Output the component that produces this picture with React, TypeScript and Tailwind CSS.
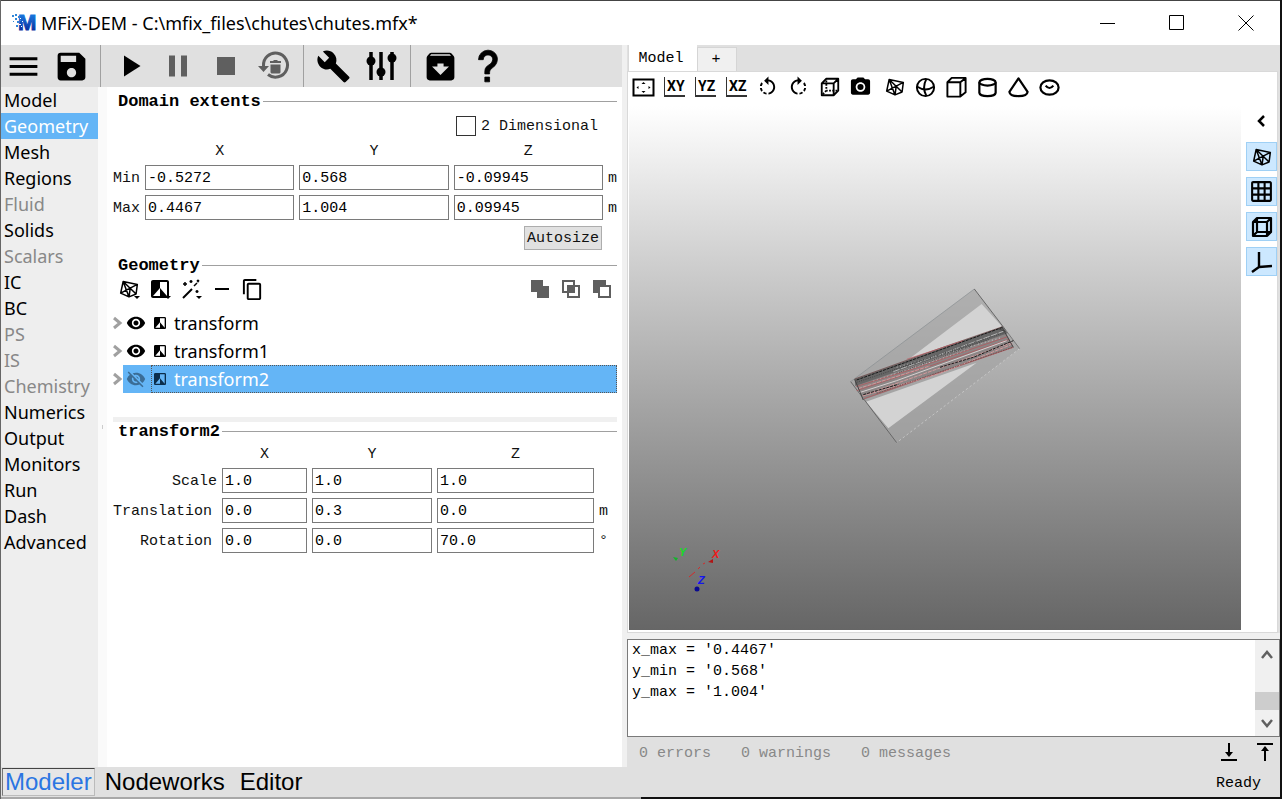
import React from 'react';
import {
  MdArchive, MdBuild, MdCameraAlt, MdContentCopy, MdFilterBAndW, MdGridOn, MdMenu, MdPause, MdPlayArrow,
  MdRemove, MdRotateLeft, MdRotateRight, MdSave, MdStop, MdVisibility, MdVisibilityOff,
} from 'react-icons/md';

const mono = "font-['Liberation_Mono',monospace] text-[15px] leading-5";
const sans = "font-['Noto_Sans',sans-serif] text-[18px]";

type BtnProps = { label: string; className: string; children: React.ReactNode; disabled?: boolean };

function IconButton({ label, className, children, disabled }: BtnProps) {
  return (
    <button type="button" aria-label={label} disabled={disabled} className={`relative flex shrink-0 items-center justify-center ${className}`}>
      {children}
    </button>
  );
}

function Stroke({ size, width = 2, children }: { size: number; width?: number; children: React.ReactNode }) {
  return (
    <svg width={size} height={size} viewBox="0 0 24 24" fill="none" stroke="currentColor" strokeWidth={width} strokeLinejoin="round">
      {children}
    </svg>
  );
}

const Poly = ({ size }: { size: number }) => (
  <Stroke size={size} width={1.8}>
    <path d="M5 3L22 6.500L20.500 18L12 21.500L2 17ZM5 3L20.500 18M5 3L12 21.500M2 17L22 6.500M12 21.500L13.500 11" />
  </Stroke>
);

function Logo() {
  return (
    <svg width="26" height="32" viewBox="0 -6 26 32" aria-hidden="true">
      <defs>
        <linearGradient id="logo" x1="0" y1="0" x2="0" y2="1">
          <stop offset="0" stopColor="#1d8cf0" />
          <stop offset="1" stopColor="#061a8c" />
        </linearGradient>
      </defs>
      <text x="6" y="17" fontSize="22" fontWeight="900" fontFamily="Liberation Sans" fill="url(#logo)" stroke="url(#logo)" strokeWidth="1">M</text>
      <g fill="#2f86d8">
        <path d="M0 2h2v2h-2zM3 1h2v2h-2zM3 5h2v2h-2zM6 3h2v2h-2zM1 8h1v1h-1zM5 8h2v2h-2zM4 12h2v2h-2zM8 7h1v1h-1z" />
      </g>
      <path d="M8 5h1v1h-1zM10 8h1v1h-1zM7 11h2v1h-2zM9 13h1v1h-1z" fill="#fff" />
    </svg>
  );
}

function TitleBar() {
  return (
    <header className="flex h-11 shrink-0 items-center bg-white pl-[11px]">
      <Logo />
      <h1 className="ml-[3px] flex-1 whitespace-nowrap font-['Noto_Sans',sans-serif] text-[18px] text-black">MFiX-DEM - C:\mfix_files\chutes\chutes.mfx*</h1>
      <IconButton label="Minimize" className="h-11 w-[69px]">
        <svg width="16" height="16" stroke="#000"><path d="M0 8.500H15" /></svg>
      </IconButton>
      <IconButton label="Maximize" className="h-11 w-[69px]">
        <svg width="16" height="16" stroke="#000" fill="none"><path d="M.5 .5H14.500V14.500H.5Z" /></svg>
      </IconButton>
      <IconButton label="Close" className="h-11 w-[69px]">
        <svg width="16" height="16" stroke="#000"><path d="M.5 .5L15.500 15.500M15.500 .5L.5 15.500" /></svg>
      </IconButton>
    </header>
  );
}

const Sep = () => <div className="mx-px w-px self-stretch bg-[#a0a0a0]" />;

function MainToolbar() {
  const b = 'h-10 w-10';
  const off = 'h-10 w-10 text-[#5f5f5f]';
  return (
    <div className="flex h-[42px] shrink-0 items-center gap-2 bg-[#e0e0e0] pl-[2px] text-black">
      <IconButton label="Menu" className={b}><MdMenu size={37} /></IconButton>
      <IconButton label="Save" className={b}><MdSave size={37} /></IconButton>
      <Sep />
      <IconButton label="Run" className={b}><MdPlayArrow size={36} /></IconButton>
      <IconButton label="Pause" className={off} disabled><MdPause size={36} /></IconButton>
      <IconButton label="Stop" className={off} disabled><MdStop size={36} /></IconButton>
      <IconButton label="Reset" className={off} disabled>
        <svg width="34" height="34" viewBox="0 0 34 34">
          <path d="M6.500 18A12 12 0 1 1 11 26.500" transform="translate(0 -1)" fill="none" stroke="currentColor" strokeWidth="3" />
          <path d="M1 17H12L6.500 23ZM13 12H16L17 11H20L21 12H24V14H13ZM13.500 15.500H23.500V23Q23.500 24.500 22 24.500H15Q13.500 24.500 13.500 23Z" fill="currentColor" />
        </svg>
      </IconButton>
      <Sep />
      <IconButton label="Settings" className={b}>
        <MdBuild size={35} />
      </IconButton>
      <IconButton label="Parameters" className={b}>
        <svg width="32" height="30" viewBox="0 0 32 30" stroke="#000" strokeWidth="3.500">
          <path d="M6 1V29M16 1V29M27 1V29" />
          <g stroke="none"><circle cx="6" cy="10" r="4.500" /><circle cx="16" cy="21" r="4.500" /><circle cx="27" cy="7" r="4.500" /></g>
        </svg>
      </IconButton>
      <Sep />
      <IconButton label="Export" className={b}><MdArchive size={37} /></IconButton>
      <IconButton label="Help" className={b}>
        <svg width="38" height="38" viewBox="0 0 24 24" stroke="#000" strokeWidth=".5">
          <path d="M10 19H13V22H10V19M12 2C17.350 2.220 19.680 7.620 16.500 11.670C15.670 12.670 14.330 13.330 13.670 14.170C13 15 13 16 13 17H10C10 15.330 10 13.920 10.670 12.920C11.330 11.920 12.670 11.330 13.500 10.670C15.920 8.430 15.320 5.260 12 5A3 3 0 0 0 9 8H6A6 6 0 0 1 12 2Z" />
        </svg>
      </IconButton>
    </div>
  );
}

const panes = ['Model', 'Geometry', 'Mesh', 'Regions', 'Fluid', 'Solids', 'Scalars', 'IC', 'BC', 'PS', 'IS', 'Chemistry', 'Numerics', 'Output', 'Monitors', 'Run', 'Dash', 'Advanced'];
const disabledPanes = ['Fluid', 'Scalars', 'PS', 'IS', 'Chemistry'];

function Sidebar() {
  return (
    <nav className={`flex w-[97px] shrink-0 flex-col bg-[#eee] ${sans}`}>
      {panes.map((p) => (
        <button
          key={p}
          type="button"
          disabled={disabledPanes.includes(p)}
          className={`h-[26px] pl-[3px] text-left leading-[26px] ${p === 'Geometry' ? 'bg-[#64b5f6] text-white' : disabledPanes.includes(p) ? 'text-[#888]' : 'text-black'}`}
        >
          {p}
        </button>
      ))}
    </nav>
  );
}

function GroupHeading({ children, className }: { children: React.ReactNode; className: string }) {
  return (
    <div className={`flex items-center gap-[2px] pl-[5px] ${className}`}>
      <h2 className="pt-[2px] font-['Liberation_Mono',monospace] text-[17px] font-bold leading-4 text-black">{children}</h2>
      <div className="h-px flex-1 bg-[#a0a0a0]" />
    </div>
  );
}

function Field({ label, value }: { label: string; value: string }) {
  return <input aria-label={label} defaultValue={value} className="h-[25px] w-full min-w-0 border border-[#7a7a7a] bg-white px-[2px] pt-[2px] text-black outline-none" />;
}

const axes = ['X', 'Y', 'Z'];

function VectorRow({ label, values, unit, pad }: { label: string; values: string[]; unit?: string; pad?: boolean }) {
  return (
    <>
      <span className={`pt-[2px] text-right ${pad ? 'pr-[5px]' : ''}`}>{label}</span>
      {values.map((v, i) => <Field key={axes[i]} label={`${label} ${axes[i]}`} value={v} />)}
      <span className="pt-[2px]">{unit}</span>
    </>
  );
}

function AxisRow() {
  return (
    <>
      <span />
      {axes.map((a) => <span key={a} className="h-[23px] text-center leading-[30px]">{a}</span>)}
      <span />
    </>
  );
}

const Caret = () => (
  <svg className="absolute bottom-0 right-1" width="6" height="4"><path d="M0 0H6L3 3Z" /></svg>
);

const tree = [
  { name: 'transform', visible: true },
  { name: 'transform1', visible: true },
  { name: 'transform2', visible: false },
];

function GeometryPane() {
  const ib = 'h-[22px] w-[31px]';
  return (
    <main className={`flex min-w-0 flex-1 flex-col bg-white pl-[6px] pr-[5px] text-[#111] ${mono}`}>
      <GroupHeading className="h-7">Domain extents</GroupHeading>
      <label className="flex h-[22px] items-center justify-end gap-[5px] pr-[19px]">
        <input type="checkbox" className="h-5 w-5 appearance-none border border-[#333] bg-white" />
        <span className="pt-[2px]">2 Dimensional</span>
      </label>
      <div className="mb-[6px] grid grid-cols-[27px_1fr_1fr_1fr_9px] items-center gap-[5px]">
        <AxisRow />
        <VectorRow label="Min" values={['-0.5272', '0.568', '-0.09945']} unit="m" />
        <VectorRow label="Max" values={['0.4467', '1.004', '0.09945']} unit="m" />
      </div>
      <button type="button" className="mr-[15px] h-6 self-end border border-[#adadad] bg-[#e1e1e1] px-[2px] pt-[2px]">Autosize</button>
      <GroupHeading className="mt-px h-7">Geometry</GroupHeading>
      <div className="flex h-5 items-center justify-between">
        <div className="flex items-center text-black">
          <IconButton label="Add geometry" className={ib}><Poly size={20} /><Caret /></IconButton>
          <IconButton label="Add filter" className={ib}><MdFilterBAndW size={24} /><Caret /></IconButton>
          <IconButton label="Wizards" className={ib}>
            <svg width="22" height="22" viewBox="0 0 22 22" stroke="#000" strokeWidth="2" fill="none">
              <path d="M3 20L12 11" strokeWidth="2" />
              <path d="M5 4V8M3 6H7M11 2V5M9.500 3.500H12.500M17 5L14 8M17 12V15M15.500 13.500H18.500M17 2L19 4M19 2L17 4" strokeWidth="1.500" />
            </svg>
            <Caret />
          </IconButton>
          <IconButton label="Remove" className={ib}><MdRemove size={24} /></IconButton>
          <IconButton label="Copy" className={ib}><MdContentCopy size={23} /></IconButton>
        </div>
        <div className="flex items-center text-[#5f5f5f]">
          <IconButton label="Union" className={ib} disabled>
            <svg width="18" height="18" fill="currentColor"><path d="M0 0H12V6H18V18H6V12H0Z" /></svg>
          </IconButton>
          <IconButton label="Intersect" className={ib} disabled>
            <svg width="18" height="18" fill="none" stroke="currentColor" strokeWidth="2"><path d="M1 1H12V12H1ZM6 6H17V17H6Z" /><path d="M6 6H12V12H6Z" fill="currentColor" /></svg>
          </IconButton>
          <IconButton label="Difference" className={ib} disabled>
            <svg width="18" height="18"><path d="M0 0H13V13H0Z" fill="currentColor" /><path d="M6 6H17V17H6Z" fill="#fff" stroke="currentColor" strokeWidth="2" /></svg>
          </IconButton>
        </div>
      </div>
      <ul className={`mt-[10px] ${sans}`}>
        {tree.map((t) => (
          <li key={t.name} className="flex h-7 items-center">
            <button type="button" aria-label={`Expand ${t.name}`} className="w-[10px]">
              <svg width="10" height="14" fill="none" stroke="#a0a0a0" strokeWidth="3"><path d="M1 2L7 7L1 12" /></svg>
            </button>
            <div className={`flex h-7 flex-1 items-center ${t.visible ? 'text-black' : 'bg-[#64b5f6] text-white'}`}>
              <button type="button" aria-label={`Toggle ${t.name}`} className={`flex w-7 justify-center pr-[2px] ${t.visible ? '' : 'text-[#3b6d96]'}`}>
                {t.visible ? <MdVisibility size={20} /> : <MdVisibilityOff size={20} />}
              </button>
              <div className={`flex h-7 flex-1 items-center border border-dotted ${t.visible ? 'border-transparent' : 'border-[#555]'}`}>
                <MdFilterBAndW size={16} className={t.visible ? '' : 'text-[#0b2e4c]'} />
                <span className="pl-[6px] leading-6">{t.name}</span>
              </div>
            </div>
          </li>
        ))}
      </ul>
      <div className="mt-6 h-[5px] bg-[#f0f0f0]" />
      <GroupHeading className="h-[18px]">transform2</GroupHeading>
      <div className="grid grid-cols-[104px_85fr_120fr_157fr_18px] items-center gap-[5px]">
        <AxisRow />
        <VectorRow label="Scale" values={['1.0', '1.0', '1.0']} />
        <VectorRow label="Translation" values={['0.0', '0.3', '0.0']} unit="m" pad />
        <VectorRow label="Rotation" values={['0.0', '0.0', '70.0']} unit="°" pad />
      </div>
    </main>
  );
}

function PlaneLabel({ children }: { children: string }) {
  return (
    <button type="button" className="flex h-5 w-[23px] shrink-0 items-end px-px">
      <span className="h-5 w-[21px] border-b-2 border-l border-[#333] pl-[2px] text-left font-['Roboto',sans-serif] text-[14px] font-bold leading-[19px] text-black">{children}</span>
    </button>
  );
}

const WireBox = () => (
  <Stroke size={24} width={2.2}><path d="M3 7H17V21H3ZM3 7L7 3H21V17L17 21M17 7L21 3M7 3V17H21M7 17L3 21" /></Stroke>
);

function ViewToolbar() {
  const b = 'h-6 w-[23px]';
  return (
    <div className="flex h-[34px] shrink-0 items-center gap-2 pl-[4px] pb-[4px] text-black">
      <IconButton label="Fit view" className={b}>
        <svg width="23" height="19" fill="none" stroke="#000" strokeWidth="2">
          <path d="M1.500 1.500H21.500V17.500H1.500Z" />
          <path d="M11.500 4L13.500 6H9.500ZM11.500 15L13.500 13H9.500ZM4.500 9.500L6.500 8V11ZM18.500 9.500L16.500 8V11Z" fill="#000" stroke="none" />
        </svg>
      </IconButton>
      <PlaneLabel>XY</PlaneLabel>
      <PlaneLabel>YZ</PlaneLabel>
      <PlaneLabel>XZ</PlaneLabel>
      <IconButton label="Rotate left" className={b}><MdRotateLeft size={24} /></IconButton>
      <IconButton label="Rotate right" className={b}><MdRotateRight size={24} /></IconButton>
      <IconButton label="Perspective" className={b}>
        <Stroke size={22}><path d="M3 8H16V21H3ZM3 8L8 3H21V16L16 21M16 8L21 3" /><path d="M8 5V16H21M8 16L3 21" strokeDasharray="2 1.500" /></Stroke>
      </IconButton>
      <IconButton label="Screenshot" className={b}><MdCameraAlt size={24} /></IconButton>
      <div className="ml-[3px] flex items-center gap-2">
        <IconButton label="Geometry" className={b}><Poly size={20} /></IconButton>
        <IconButton label="Sphere" className={b}>
          <Stroke size={23} width={2}><circle cx="12" cy="12" r="9" /><path d="M13 3Q8 12 13 21M3 11Q12 17 21 11" /></Stroke>
        </IconButton>
        <IconButton label="Box" className={b}>
          <Stroke size={24} width={2}><path d="M2.500 7H16V22H2.500ZM2.500 7L7 2.500H21.500V17.500L16 22M16 7L21.500 2.500" /></Stroke>
        </IconButton>
        <IconButton label="Cylinder" className={b}>
          <Stroke size={23} width={2.300}><ellipse cx="12" cy="6.500" rx="8.500" ry="3.500" /><path d="M3.500 6.500V17.500Q4 21 12 21T20.500 17.500V6.500" /></Stroke>
        </IconButton>
        <IconButton label="Cone" className={b}>
          <Stroke size={23} width={2.300}><path d="M12 2.500L2.500 16.500Q3 21 12 21T21.500 16.500Z" /></Stroke>
        </IconButton>
        <IconButton label="Torus" className={b}>
          <Stroke size={23} width={2.300}><ellipse cx="12" cy="12" rx="9.500" ry="7.500" /><path d="M8 10Q12 15 16 10" /></Stroke>
        </IconButton>
      </div>
    </div>
  );
}

function Scene() {
  return (
    <svg className="h-full w-full" viewBox="0 0 612 524" role="img" aria-label="Model view">
      <g transform="translate(201 164) scale(.3333)" fill="none">
        <path d="M433 57L569 236L200 518L62 335Z" fill="#a3a3a3" fillOpacity=".65" />
        <path d="M433 57L62 335" stroke="#868c8f" strokeWidth="2" />
        <path d="M569 236L200 518" stroke="#d5d5d5" strokeWidth="2" strokeDasharray="7 7" />
        <path d="M455 102L518 172L240 265ZM108 395L440 278L175 475Z" fill="#d3d3d3" />
        <path d="M433 57L527 180M62 335L200 518" stroke="#666" strokeWidth="3" />
        <path d="M527 180L569 236" stroke="#777" strokeWidth="3" />
        <path d="M74 328L518 170L551 232L98 390Z" fill="#8b8585" />
        <path d="M74 328L518 170L533 190L76 348Z" fill="#666" />
        <path d="M74 327L350 228L518 170" stroke="#5f3838" strokeWidth="2" />
        <path d="M230 268L400 212" stroke="#bc5960" strokeWidth="2" />
        <path d="M190 305L520 184" stroke="#ddd" strokeWidth="2" strokeDasharray="20 4" />
        <path d="M200 292L510 204M130 333L420 238" stroke="#eee" strokeWidth="2" strokeDasharray="3 8" />
        <path d="M80 337L522 188M220 290L480 208M200 310L420 230" stroke="#333" strokeWidth="2" strokeDasharray="3 4" />
        <path d="M78 350L250 297L533 200M80 362L538 208M102 386L550 232" stroke="#b64e55" strokeWidth="2" />
        <path d="M98 378L330 310L548 222M84 356L300 288M110 372L545 218" stroke="#d2999b" strokeWidth="3" strokeDasharray="12 3" />
        <path d="M88 368L200 332L530 212" stroke="#d7d1d1" strokeWidth="3" />
        <path d="M100 374L205 343M330 292L430 262L550 212M80 330L518 172" stroke="#181818" strokeWidth="3" strokeDasharray="9 3" />
        <path d="M140 370L548 232" stroke="#663b3b" strokeWidth="2" strokeDasharray="5 3" />
        <path d="M74 328L100 390M508 178L527 184M515 170L550 232" stroke="#444" strokeWidth="3" />
      </g>
      <path d="M60 471L66 466M69 463L71 461M74 458L76 457" stroke="#d42a2a" strokeWidth="1" />
      <path d="M79 456L84 453V457Z" fill="#b01515" />
      <path d="M44 451L49 452L47 455Z" fill="#11b52a" />
      <circle cx="68" cy="483" r="2.500" fill="#0a0a90" />
      <g fontFamily="Liberation Sans" fontSize="11" fontWeight="bold" fontStyle="italic">
        <text x="50" y="450" fill="#15dc25">Y</text>
        <text x="83" y="452" fill="#f01818">X</text>
        <text x="69" y="478" fill="#1414f0">Z</text>
      </g>
    </svg>
  );
}

function Viewer() {
  const toggle = 'h-[29px] w-[31px] border border-[#9fd0f5] bg-[#cce8ff]';
  return (
    <section className={`flex min-h-0 flex-1 flex-col bg-[#e0e0e0] ${mono}`}>
      <div className="flex h-[26px] shrink-0 items-end pl-px">
        <button type="button" className="h-[26px] w-[69px] border-l border-[#d9d9d9] bg-white pr-1 pt-[2px] text-center text-black">Model</button>
        <button type="button" className="h-6 w-10 border border-b-0 border-[#d5d5d5] bg-[#f0f0f0] pr-[2px] text-center text-black">+</button>
      </div>
      <div className="mr-[2px] flex min-h-0 flex-1 flex-col border border-[#d9d9d9] bg-white">
        <ViewToolbar />
        <div className="flex min-h-0 flex-1 pb-[2px]">
          <div className="ml-px min-w-0 flex-1 bg-gradient-to-b from-white to-[#666]"><Scene /></div>
          <div className="flex w-9 flex-col items-end gap-[6px] text-black">
            <IconButton label="Collapse" className="h-[30px] w-[31px]">
              <svg width="12" height="14" fill="none" stroke="#000" strokeWidth="2.500"><path d="M8 2L3 7L8 12" /></svg>
            </IconButton>
            <IconButton label="Show geometry" className={toggle}><Poly size={20} /></IconButton>
            <IconButton label="Show grid" className={toggle}><MdGridOn size={25} /></IconButton>
            <IconButton label="Show box" className={toggle}><WireBox /></IconButton>
            <IconButton label="Show axes" className={toggle}>
              <Stroke size={24} width={2.4}><path d="M9 2V17L22 16M9 17L2 22" /></Stroke>
            </IconButton>
          </div>
        </div>
      </div>
    </section>
  );
}

function Console() {
  return (
    <>
      <div className="mt-[6px] flex h-[98px] shrink-0 border border-[#7a7a7a] bg-white">
        <pre className="flex-1 overflow-hidden pl-1 font-['Liberation_Mono',monospace] text-[15px] leading-[21px] text-black">
          {"x_max = '0.4467'\ny_min = '0.568'\ny_max = '1.004'"}
        </pre>
        <div className="flex w-6 flex-col items-center bg-[#f0f0f0]">
          <button type="button" aria-label="Scroll up" className="flex h-[30px] items-center">
            <svg width="12" height="12" fill="none" stroke="#606060" strokeWidth="2.500"><path d="M1 9L6 3L11 9" /></svg>
          </button>
          <div className="mt-[22px] h-[18px] w-full bg-[#cdcdcd]" />
          <button type="button" aria-label="Scroll down" className="flex h-[26px] items-center">
            <svg width="12" height="12" fill="none" stroke="#606060" strokeWidth="2.500"><path d="M1 3L6 9L11 3" /></svg>
          </button>
        </div>
      </div>
      <div className={`flex h-[30px] shrink-0 items-center gap-[30px] bg-[#e0e0e0] pl-3 pr-[5px] text-[#888] ${mono}`}>
        <span className="pt-[3px]">0 errors</span>
        <span className="pt-[3px]">0 warnings</span>
        <span className="pt-[3px]">0 messages</span>
        <div className="ml-auto flex gap-4">
          <IconButton label="Scroll to bottom" className="h-5 w-5">
            <svg width="18" height="20" fill="none" stroke="#000" strokeWidth="2"><path d="M1 18H17M9 1V12" /><path d="M5 10H13L9 15Z" fill="#000" stroke="none" /></svg>
          </IconButton>
          <IconButton label="Scroll to top" className="h-5 w-5">
            <svg width="18" height="20" fill="none" stroke="#000" strokeWidth="2"><path d="M1 2H17M9 19V7" /><path d="M5 9H13L9 4Z" fill="#000" stroke="none" /></svg>
          </IconButton>
        </div>
      </div>
    </>
  );
}

export default function App() {
  return (
    <div className="flex h-screen flex-col border-l border-r-2 border-l-[#666] border-r-[#111] bg-[#f0f0f0]">
      <div className="h-px shrink-0 bg-[#444]" />
      <TitleBar />
      <div className="flex min-h-0 flex-1">
        <div className="flex w-[621px] shrink-0 flex-col">
          <MainToolbar />
          <div className="flex min-h-0 flex-1">
            <Sidebar />
            <div className="flex w-[9px] items-center justify-center bg-[#fafafa]"><div className="h-1 w-px bg-[#ccc]" /></div>
            <GeometryPane />
          </div>
        </div>
        <div className="flex min-w-0 flex-1 flex-col pl-[5px]">
          <Viewer />
          <Console />
        </div>
      </div>
      <footer className="flex h-[30px] shrink-0 items-center bg-[#e0e0e0] pr-[19px] font-['Liberation_Sans',sans-serif] text-[24px] leading-[26px] text-black">
        <button type="button" className="ml-px h-7 border border-[#bbb] border-l-[#777] border-t-[#444] bg-[#e6e6e6] px-[2px] text-[#2a75e2]">Modeler</button>
        <button type="button" className="pl-[10px]">Nodeworks</button>
        <button type="button" className="pl-[15px]">Editor</button>
        <span className={`ml-auto pt-[3px] ${mono}`}>Ready</span>
      </footer>
      <div className="flex h-[2px] shrink-0"><div className="flex-1 bg-[#a8a8a8]" /><div className="flex-1 bg-[#111]" /></div>
    </div>
  );
}
